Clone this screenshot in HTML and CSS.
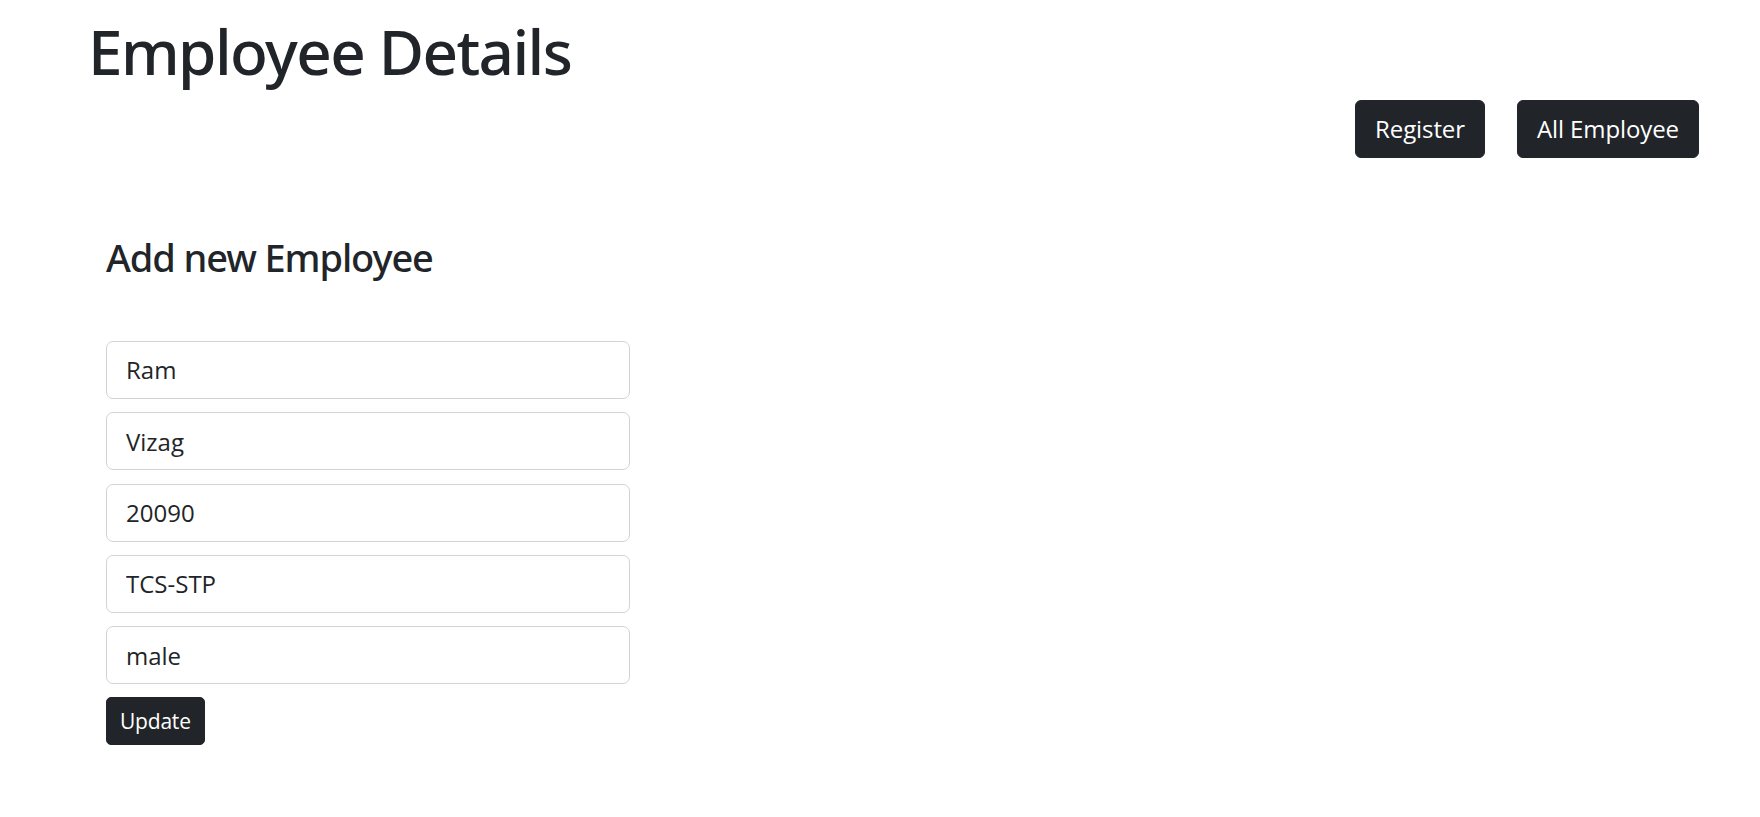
FILE: index.html
```html
<!DOCTYPE html>
<html lang="en">
<head>
<meta charset="utf-8">
<title>Employee Details</title>
<link rel="stylesheet" href="styles.css">
</head>
<body>
<div class="page">
  <header class="top">
    <h1 class="title">Employee Details</h1>
    <nav class="nav">
      <button class="btn btn-lg" type="button">Register</button>
      <button class="btn btn-lg" type="button">All Employee</button>
    </nav>
  </header>
  <section class="form-section">
    <h2 class="subtitle">Add new Employee</h2>
    <form class="form">
      <input class="field" type="text" value="Ram">
      <input class="field" type="text" value="Vizag">
      <input class="field" type="text" value="20090">
      <input class="field" type="text" value="TCS-STP">
      <input class="field" type="text" value="male">
      <div class="actions">
        <button class="btn btn-sm" type="button">Update</button>
      </div>
    </form>
  </section>
</div>
</body>
</html>
```
FILE: styles.css
```css
* { box-sizing: border-box; }
html, body { margin: 0; padding: 0; background: #fff; }
body {
  font-family: "Open Sans", "Noto Sans", "Liberation Sans", sans-serif;
  color: #212529;
}
.page { padding: 14px 61px 0 88px; }
.top { display: flex; flex-direction: column; }
.title {
  margin: 0;
  font-family: "Noto Sans", "Open Sans", sans-serif;
  font-size: 62px;
  font-weight: 500;
  line-height: 1.2;
  letter-spacing: -1.6px;
}
.nav {
  display: flex;
  justify-content: flex-end;
  gap: 32px;
  margin-top: 12px;
}
.btn {
  font-family: inherit;
  background: #212529;
  color: #fff;
  border: 1px solid #212529;
  cursor: pointer;
}
.btn-lg {
  font-size: 24px;
  line-height: 36px;
  padding: 10px 19px;
  border-radius: 6px;
  height: 58px;
  letter-spacing: -0.1px;
}
.btn-sm {
  font-size: 21px;
  line-height: 30px;
  padding: 8px 13px;
  border-radius: 5px;
  height: 48px;
  letter-spacing: -0.2px;
}
.form-section { padding-left: 18px; margin-top: 77px; }
.subtitle {
  margin: 0;
  font-family: "Noto Sans", "Open Sans", sans-serif;
  font-size: 38px;
  font-weight: 500;
  line-height: 1.2;
  letter-spacing: -1.1px;
}
.form {
  margin-top: 60px;
  width: 524px;
  display: flex;
  flex-direction: column;
  gap: 13.3px;
}
.field {
  display: block;
  width: 100%;
  height: 58px;
  font-family: inherit;
  font-size: 24px;
  line-height: 36px;
  padding: 10px 19px;
  color: #212529;
  background: #fff;
  border: 1px solid #ced4da;
  border-radius: 7px;
  outline: none;
}
.actions { display: flex; }
```
